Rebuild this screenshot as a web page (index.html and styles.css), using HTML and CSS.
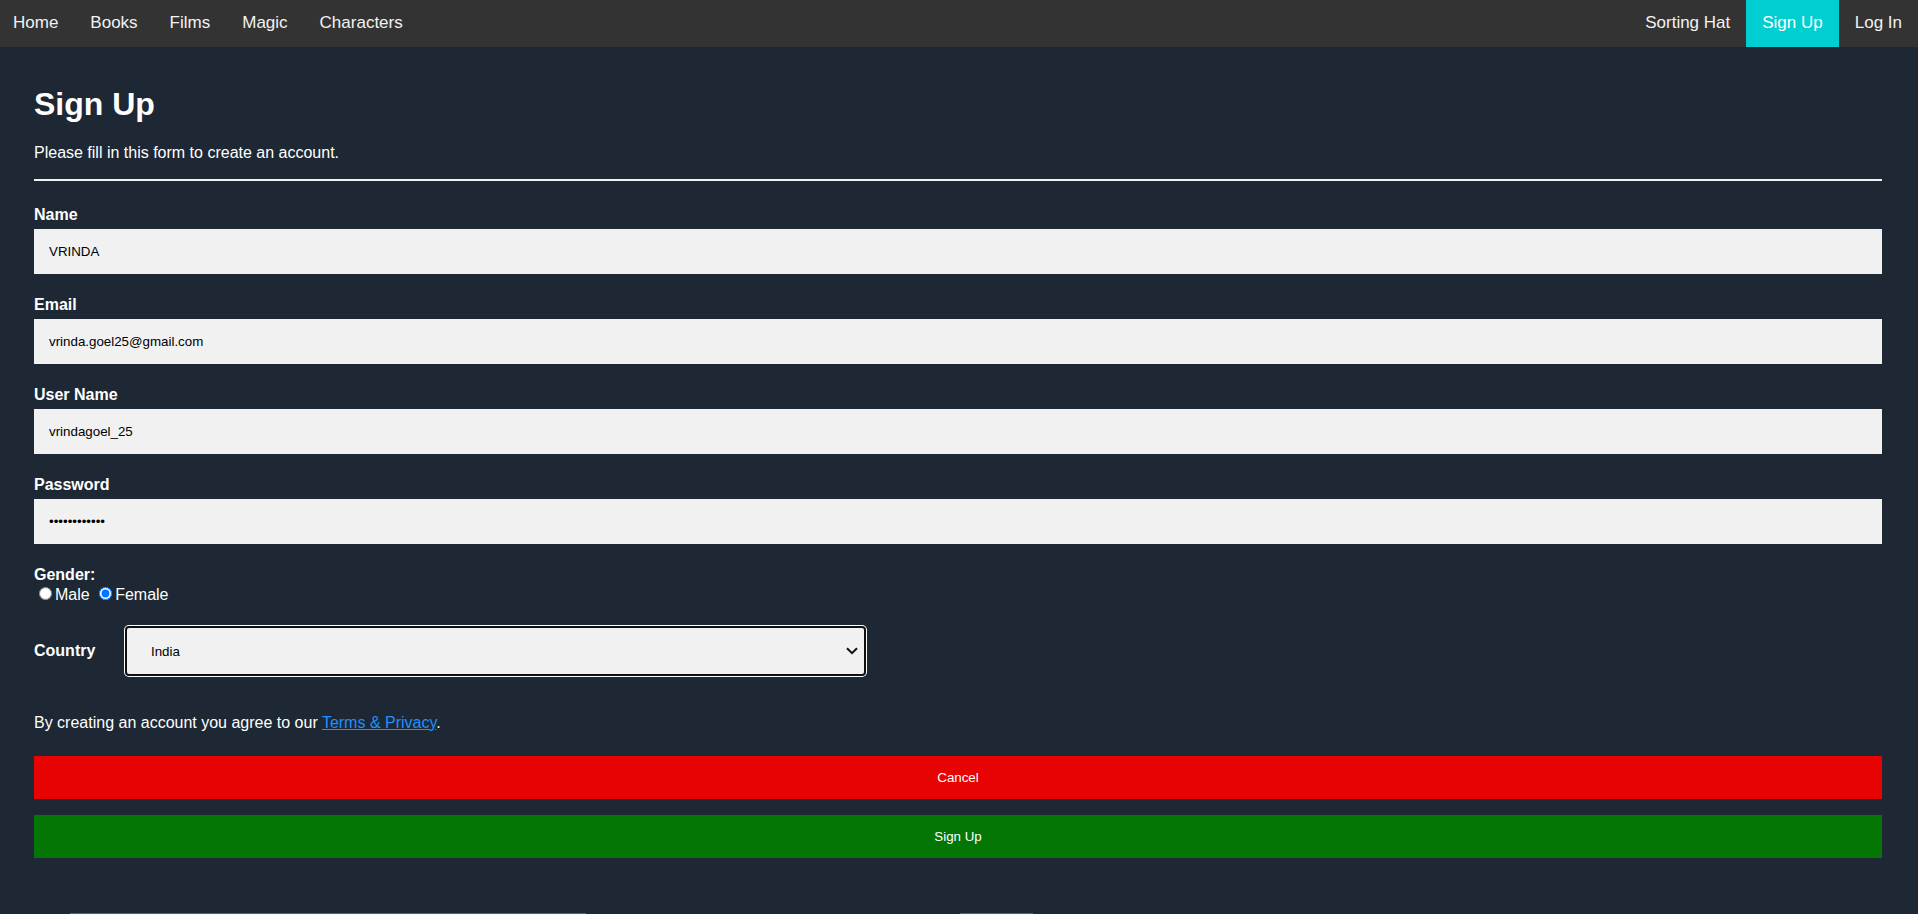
FILE: index.html
```html
<!DOCTYPE html>
<html lang="en">
<head>
<meta charset="utf-8">
<title>Sign Up</title>
<link rel="stylesheet" href="styles.css">
</head>
<body>
<nav class="topnav">
  <div class="nav-group">
    <a href="#" class="nav-link first">Home</a>
    <a href="#" class="nav-link">Books</a>
    <a href="#" class="nav-link">Films</a>
    <a href="#" class="nav-link">Magic</a>
    <a href="#" class="nav-link">Characters</a>
  </div>
  <div class="nav-group nav-right">
    <a href="#" class="nav-link">Sorting Hat</a>
    <a href="#" class="nav-link active">Sign Up</a>
    <a href="#" class="nav-link">Log In</a>
  </div>
</nav>

<form class="container">
  <h1 class="title">Sign Up</h1>
  <p class="intro">Please fill in this form to create an account.</p>
  <hr class="divider">

  <div class="field">
    <label class="field-label" for="name">Name</label>
    <input class="text-input" type="text" id="name" value="VRINDA">
  </div>
  <div class="field">
    <label class="field-label" for="email">Email</label>
    <input class="text-input" type="text" id="email" value="vrinda.goel25@gmail.com">
  </div>
  <div class="field">
    <label class="field-label" for="uname">User Name</label>
    <input class="text-input" type="text" id="uname" value="vrindagoel_25">
  </div>
  <div class="field">
    <label class="field-label" for="pwd">Password</label>
    <input class="text-input" type="password" id="pwd" value="vrindagoel25">
  </div>

  <div class="gender">
    <div class="field-label">Gender:</div>
    <div class="radio-line">
      <input class="radio" type="radio" name="gender" id="male"><label for="male">Male</label>
      <input class="radio" type="radio" name="gender" id="female" checked><label for="female">Female</label>
    </div>
  </div>

  <div class="country-row">
    <label class="field-label country-label" for="country">Country</label>
    <div class="select-wrap">
      <select class="select" id="country">
        <option>India</option>
        <option>United Kingdom</option>
        <option>United States</option>
      </select>
      <svg class="chevron" width="12" height="8" viewBox="0 0 12 8" aria-hidden="true">
        <path d="M1 1.2 L6 6.2 L11 1.2" fill="none" stroke="#111" stroke-width="2"/>
      </svg>
    </div>
  </div>

  <p class="terms">By creating an account you agree to our <a class="terms-link" href="#">Terms &amp; Privacy</a>.</p>

  <div class="actions">
    <button type="button" class="btn cancel">Cancel</button>
    <button type="submit" class="btn signup">Sign Up</button>
  </div>
</form>

<div class="footer-edge">
  <div class="edge-bar bar-a"></div>
  <div class="edge-bar bar-b"></div>
</div>
</body>
</html>
```

FILE: styles.css
```css
html, body {
  margin: 0;
  padding: 0;
  overflow: hidden;
}

body {
  display: flex;
  flex-direction: column;
  height: 100vh;
  background: #1d2834;
  color: #ffffff;
  font-family: "Liberation Sans", Arial, sans-serif;
  font-size: 16px;
}

.topnav {
  display: flex;
  flex: none;
  background: #333333;
}

.nav-group {
  display: flex;
}

.nav-right {
  margin-left: auto;
}

.nav-link {
  display: block;
  padding: 13px 16px 15px;
  font-size: 17px;
  line-height: 19px;
  color: #f2f2f2;
  text-decoration: none;
}

.nav-link.first {
  padding-left: 13px;
}

.nav-link.active {
  background: #00ced1;
  color: #ffffff;
}

.container {
  display: block;
  flex: none;
  margin: 0;
  padding: 16px 36px 0 34px;
}

.title {
  margin: 23px 0 0;
  font-size: 32px;
  line-height: 37px;
  font-weight: bold;
}

.intro {
  margin: 21px 0 0;
  line-height: 18px;
}

.divider {
  margin: 17px 0 25px;
  height: 0;
  border: 1px solid #f1f1f1;
}

.field-label {
  display: block;
  font-weight: bold;
  line-height: 18px;
}

.text-input {
  display: block;
  box-sizing: border-box;
  width: 100%;
  height: 45px;
  margin: 5px 0 22px;
  padding: 0 15px;
  border: none;
  background: #f1f1f1;
  color: #000000;
  font-family: "Liberation Sans", Arial, sans-serif;
  font-size: 13.333px;
  outline: none;
}

.radio-line {
  line-height: 18px;
}

.radio {
  width: 13px;
  height: 13px;
  margin: 3px 3px 0 5px;
  vertical-align: baseline;
}

.country-row {
  display: flex;
  align-items: center;
  margin-top: 22px;
}

.country-label {
  width: 91px;
  flex: none;
}

.select-wrap {
  position: relative;
  width: 741px;
  height: 50px;
}

.select {
  -webkit-appearance: none;
  appearance: none;
  box-sizing: border-box;
  width: 100%;
  height: 100%;
  padding: 0 24px;
  border: 2px solid #101010;
  border-radius: 4px;
  box-shadow: 0 0 0 1px #ffffff;
  background: #f1f1f1;
  color: #000000;
  font-family: "Liberation Sans", Arial, sans-serif;
  font-size: 13.333px;
  outline: none;
}

.chevron {
  position: absolute;
  right: 8px;
  top: 21px;
  pointer-events: none;
}

.terms {
  margin: 38px 0 0;
  line-height: 18px;
}

.terms-link {
  color: #1e90ff;
}

.actions {
  display: flex;
  flex-direction: column;
  gap: 16px;
  margin-top: 24px;
}

.btn {
  display: block;
  width: 100%;
  height: 43px;
  padding: 0 20px;
  border: none;
  color: #ffffff;
  font-family: "Liberation Sans", Arial, sans-serif;
  font-size: 13.333px;
  cursor: pointer;
}

.cancel {
  background: #e80303;
}

.signup {
  background: #037605;
}

.footer-edge {
  display: flex;
  flex: none;
  height: 1px;
  margin-top: auto;
  padding-left: 70px;
}

.edge-bar {
  height: 1px;
  background: #5c5f63;
}

.bar-a {
  width: 516px;
}

.bar-b {
  width: 73px;
  margin-left: 374px;
}
```
